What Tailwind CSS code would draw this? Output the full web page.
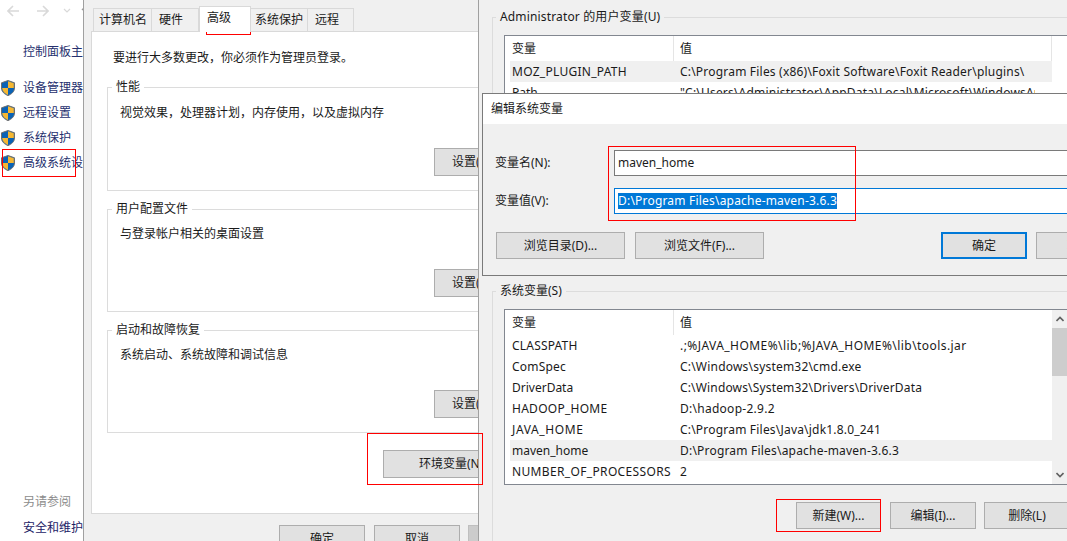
<!DOCTYPE html>
<html>
<head>
<meta charset="utf-8" />
<title>环境变量</title>
<script src="https://cdn.jsdelivr.net/npm/@tailwindcss/browser@4"></script>
</head>
<body class="bg-white">
<svg class="hidden" xmlns="http://www.w3.org/2000/svg">
    <symbol id="shield" viewBox="0 0 14 16">
        <path d="M7 .5 13.5 2.8V8C13.5 11.8 10.4 14.2 7 15.6 3.6 14.2.5 11.8.5 8V2.8Z" fill="#0a62b5" stroke="#6f6f6f"/>
        <path d="M7 1.2 12.8 3.2V8H7ZM7 8V14.9C4.4 13.8 1.4 11.6 1.2 8Z" fill="#f6b732"/>
    </symbol>
</svg>

<div class="relative w-[1067px] h-[541px] overflow-hidden bg-white text-[12px] leading-[16px] text-[#1a1a1a] whitespace-nowrap [font-family:'Noto_Sans','Noto_Sans_CJK_SC',sans-serif]">

    <!-- Control panel side -->
    <aside class="absolute left-0 top-0 w-[84px] h-[541px] overflow-hidden border-r border-[#a0a0a0] flex flex-col text-[#26306e]">
        <div class="flex items-center h-[22px] text-[#d9d9d9]">
            <svg class="ml-[7px] w-[12px] h-[12px] shrink-0" viewBox="0 0 12 12" fill="none" stroke="currentColor" stroke-width="1.6"><path d="M12 6H1M6 1 1 6l5 5"/></svg>
            <svg class="ml-[18px] w-[12px] h-[12px] shrink-0" viewBox="0 0 12 12" fill="none" stroke="currentColor" stroke-width="1.6"><path d="M0 6h11M6 1l5 5-5 5"/></svg>
            <svg class="ml-[14px] w-[8px] h-[8px] shrink-0" viewBox="0 0 8 8" fill="none" stroke="currentColor" stroke-width="1.2"><path d="M1 2l3 3 3-3"/></svg>
            <svg class="ml-[10px] w-[10px] h-[12px] shrink-0" viewBox="0 0 10 12" fill="none" stroke="#9a9a9a" stroke-width="1.4"><path d="M1 5l3-3 3 3M4 2v9"/></svg>
        </div>
        <div class="pl-[23px] mt-[22px]">控制面板主页</div>
        <ul class="mt-[20px] flex flex-col gap-[9px]">
            <li class="flex items-center h-[16px]"><svg class="ml-[1px] w-[14px] h-[16px] shrink-0"><use href="#shield"/></svg><span class="ml-[8px]">设备管理器</span></li>
            <li class="flex items-center h-[16px]"><svg class="ml-[1px] w-[14px] h-[16px] shrink-0"><use href="#shield"/></svg><span class="ml-[8px]">远程设置</span></li>
            <li class="flex items-center h-[16px]"><svg class="ml-[1px] w-[14px] h-[16px] shrink-0"><use href="#shield"/></svg><span class="ml-[8px]">系统保护</span></li>
            <li class="flex items-center h-[16px]"><svg class="ml-[1px] w-[14px] h-[16px] shrink-0"><use href="#shield"/></svg><span class="ml-[8px]">高级系统设置</span></li>
        </ul>
        <div class="mt-auto pl-[23px] text-[#8c8c8c]">另请参阅</div>
        <div class="mt-[10px] mb-[5px] pl-[23px] text-[#1c2266]">安全和维护</div>
    </aside>

    <!-- System properties -->
    <section class="absolute left-[84px] top-0 w-[394px] h-[541px] overflow-hidden bg-[#f0f0f0]">
        <div class="flex items-end h-[31px] pl-[9px] relative z-10">
            <div class="flex items-center h-[23px] w-[59px] pl-[5px] border border-b-0 border-[#d9d9d9]">计算机名</div>
            <div class="flex items-center h-[23px] w-[47px] pl-[7px] border border-b-0 border-l-0 border-[#d9d9d9]">硬件</div>
            <div class="flex items-center h-[26px] w-[52px] pl-[7px] pb-[4px] -mb-px border border-b-0 border-[#d9d9d9] bg-white">高级</div>
            <div class="flex items-center h-[23px] w-[57px] pl-[4px] border border-b-0 border-l-0 border-[#d9d9d9]">系统保护</div>
            <div class="flex items-center h-[23px] w-[46px] pl-[7px] border border-b-0 border-l-0 border-[#d9d9d9]">远程</div>
        </div>
        <div class="ml-[7px] w-[420px] h-[483px] border border-[#d9d9d9] bg-white">
            <p class="pl-[21px] pt-[18px]">要进行大多数更改，你必须作为管理员登录。</p>
            <div class="ml-[15px] mt-[13px] w-[400px] flex flex-col gap-[10px]">
                <fieldset class="h-[112px] border border-[#dcdcdc]">
                    <legend class="ml-[4px] px-[4px]">性能</legend>
                    <p class="pl-[12px] pt-[10px]">视觉效果，处理器计划，内存使用，以及虚拟内存</p>
                    <button class="block mt-[27px] ml-[326px] w-[86px] h-[28px] pl-[17px] text-left bg-[#e1e1e1] border border-[#adadad]">设置(S)...</button>
                </fieldset>
                <fieldset class="h-[111px] border border-[#dcdcdc]">
                    <legend class="ml-[4px] px-[4px]">用户配置文件</legend>
                    <p class="pl-[12px] pt-[9px]">与登录帐户相关的桌面设置</p>
                    <button class="block mt-[27px] ml-[326px] w-[86px] h-[28px] pl-[17px] text-left bg-[#e1e1e1] border border-[#adadad]">设置(E)...</button>
                </fieldset>
                <fieldset class="h-[111px] border border-[#dcdcdc]">
                    <legend class="ml-[4px] px-[4px]">启动和故障恢复</legend>
                    <p class="pl-[12px] pt-[9px]">系统启动、系统故障和调试信息</p>
                    <button class="block mt-[27px] ml-[326px] w-[86px] h-[28px] pl-[17px] text-left bg-[#e1e1e1] border border-[#adadad]">设置(T)...</button>
                </fieldset>
            </div>
            <button class="block mt-[17px] ml-[291px] w-[100px] h-[28px] pl-[35px] text-left bg-[#e1e1e1] border border-[#adadad]">环境变量(N)...</button>
        </div>
        <div class="flex gap-[9px] mt-[11px] ml-[195px]">
            <button class="w-[86px] h-[28px] shrink-0 bg-[#e1e1e1] border border-[#adadad]">确定</button>
            <button class="w-[86px] h-[28px] shrink-0 bg-[#e1e1e1] border border-[#adadad]">取消</button>
            <button class="w-[86px] h-[28px] shrink-0 -ml-px bg-[#cccccc] border border-[#bfbfbf]"></button>
        </div>
    </section>

    <!-- Environment variables -->
    <section class="absolute left-[478px] top-0 w-[589px] h-[541px] overflow-hidden bg-[#f0f0f0] border-l border-[#a0a0a0]">
        <fieldset class="mt-[9px] ml-[13px] w-[620px] h-[264px] border border-[#dcdcdc]">
            <legend class="ml-[3px] px-[4px] tracking-[0.15px]">Administrator 的用户变量(U)</legend>
            <div class="mt-[10px] ml-[11px] w-[600px] h-[120px] bg-white border border-[#828790]">
                <div class="flex h-[25px] items-center">
                    <div class="w-[169px] h-full pl-[7px] flex items-center border-r border-[#e5e5e5]">变量</div>
                    <div class="w-[378px] h-full pl-[6px] flex items-center border-r border-[#e5e5e5]">值</div>
                </div>
                <div class="flex h-[21px] items-center ml-[5px] w-[542px] pl-[2px] bg-[#f0f0f0]">
                    <span class="w-[168px] tracking-[0.27px]">MOZ_PLUGIN_PATH</span><span class="tracking-[0.2px]">C:\Program Files (x86)\Foxit Software\Foxit Reader\plugins\</span>
                </div>
                <div class="flex h-[21px] items-center ml-[5px] w-[542px] pl-[2px]">
                    <span class="w-[168px] shrink-0">Path</span><span class="w-[355px] overflow-hidden tracking-[0.2px]">"C:\Users\Administrator\AppData\Local\Microsoft\WindowsApps</span>
                </div>
            </div>
        </fieldset>
        <fieldset class="mt-[10px] ml-[13px] w-[620px] h-[300px] border border-[#dcdcdc]">
            <legend class="ml-[3px] px-[4px]">系统变量(S)</legend>
            <div class="mt-[10px] ml-[11px] w-[600px] h-[176px] flex bg-white border border-[#828790]">
                <div class="w-[547px] shrink-0">
                    <div class="flex h-[25px] items-center">
                        <div class="w-[169px] h-full pl-[7px] flex items-center border-r border-[#e5e5e5]">变量</div>
                        <div class="pl-[6px]">值</div>
                    </div>
                    <div class="flex h-[21px] items-center ml-[5px] pl-[2px]"><span class="w-[168px] tracking-[0.2px]">CLASSPATH</span><span class="tracking-[0.44px]">.;%JAVA_HOME%\lib;%JAVA_HOME%\lib\tools.jar</span></div>
                    <div class="flex h-[21px] items-center ml-[5px] pl-[2px]"><span class="w-[168px] tracking-[0.2px]">ComSpec</span><span class="tracking-[0.2px]">C:\Windows\system32\cmd.exe</span></div>
                    <div class="flex h-[21px] items-center ml-[5px] pl-[2px]"><span class="w-[168px]">DriverData</span><span class="tracking-[0.16px]">C:\Windows\System32\Drivers\DriverData</span></div>
                    <div class="flex h-[21px] items-center ml-[5px] pl-[2px]"><span class="w-[168px] tracking-[0.27px]">HADOOP_HOME</span><span class="tracking-[0.27px]">D:\hadoop-2.9.2</span></div>
                    <div class="flex h-[21px] items-center ml-[5px] pl-[2px]"><span class="w-[168px] tracking-[0.6px]">JAVA_HOME</span><span class="tracking-[0.2px]">C:\Program Files\Java\jdk1.8.0_241</span></div>
                    <div class="flex h-[21px] items-center ml-[5px] pl-[2px] bg-[#f0f0f0]"><span class="w-[168px]">maven_home</span><span class="tracking-[0.2px]">D:\Program Files\apache-maven-3.6.3</span></div>
                    <div class="flex h-[21px] items-center ml-[5px] pl-[2px]"><span class="w-[168px] tracking-[0.35px]">NUMBER_OF_PROCESSORS</span><span>2</span></div>
                </div>
                <div class="w-[17px] shrink-0 flex flex-col bg-[#f0f0f0] text-[#606060]">
                    <div class="h-[18px] flex items-center justify-center pr-[2px]">
                        <svg class="w-[8px] h-[6px]" viewBox="0 0 8 6" fill="none" stroke="currentColor" stroke-width="1.6"><path d="M.5 5 4 1.5 7.5 5"/></svg>
                    </div>
                    <div class="h-[48px] bg-[#cdcdcd]"></div>
                    <div class="mt-auto h-[18px] flex items-center justify-center pr-[2px]">
                        <svg class="w-[8px] h-[6px]" viewBox="0 0 8 6" fill="none" stroke="currentColor" stroke-width="1.6"><path d="M.5 1 4 4.5 7.5 1"/></svg>
                    </div>
                </div>
            </div>
            <div class="flex mt-[17px] ml-[303px]">
                <button class="w-[85px] h-[27px] shrink-0 bg-[#e1e1e1] border border-[#adadad]">新建(W)...</button>
                <button class="ml-[9px] w-[86px] h-[27px] shrink-0 bg-[#e1e1e1] border border-[#adadad]">编辑(I)...</button>
                <button class="ml-[8px] w-[86px] h-[27px] shrink-0 bg-[#e1e1e1] border border-[#adadad]">删除(L)</button>
            </div>
        </fieldset>
    </section>

    <!-- Edit variable dialog -->
    <section class="absolute left-[482px] top-[93px] w-[600px] h-[183px] bg-[#f0f0f0] border border-[#7a7a7a]">
        <div class="h-[30px] bg-white pl-[8px] flex items-center">编辑系统变量</div>
        <div class="flex items-center mt-[26px] h-[26px]">
            <label class="w-[131px] shrink-0 pl-[12px]">变量名(N):</label>
            <div class="w-[500px] shrink-0 h-full pl-[3px] flex items-center bg-white border border-[#7a7a7a]">maven_home</div>
        </div>
        <div class="flex items-center mt-[12px] h-[26px]">
            <label class="w-[131px] shrink-0 pl-[12px]">变量值(V):</label>
            <div class="w-[500px] shrink-0 h-full pl-[3px] flex items-center bg-white border border-[#0078d7]"><span class="bg-[#0078d7] text-white tracking-[0.2px]">D:\Program Files\apache-maven-3.6.3</span></div>
        </div>
        <div class="flex mt-[18px] pl-[13px]">
            <button class="w-[129px] h-[27px] shrink-0 bg-[#e1e1e1] border border-[#adadad]">浏览目录(D)...</button>
            <button class="ml-[10px] w-[129px] h-[27px] shrink-0 bg-[#e1e1e1] border border-[#adadad]">浏览文件(F)...</button>
            <button class="ml-[177px] w-[86px] h-[27px] shrink-0 bg-[#e1e1e1] border-2 border-[#0078d7]">确定</button>
            <button class="ml-[9px] w-[86px] h-[27px] shrink-0 bg-[#e1e1e1] border border-[#adadad]">取消</button>
        </div>
    </section>

    <!-- Red annotation boxes -->
    <div class="absolute left-[2px] top-[149px] w-[74px] h-[28px] border border-[#ff0000]"></div>
    <div class="absolute left-[206px] top-[11px] w-[45px] h-[24px] border border-[#ff0000]"></div>
    <div class="absolute left-[367px] top-[433px] w-[116px] h-[52px] border border-[#ff0000]"></div>
    <div class="absolute left-[608px] top-[146px] w-[248px] h-[75px] border border-[#ff0000]"></div>
    <div class="absolute left-[776px] top-[499px] w-[105px] h-[33px] border border-[#ff0000]"></div>
</div>
</body>
</html>
